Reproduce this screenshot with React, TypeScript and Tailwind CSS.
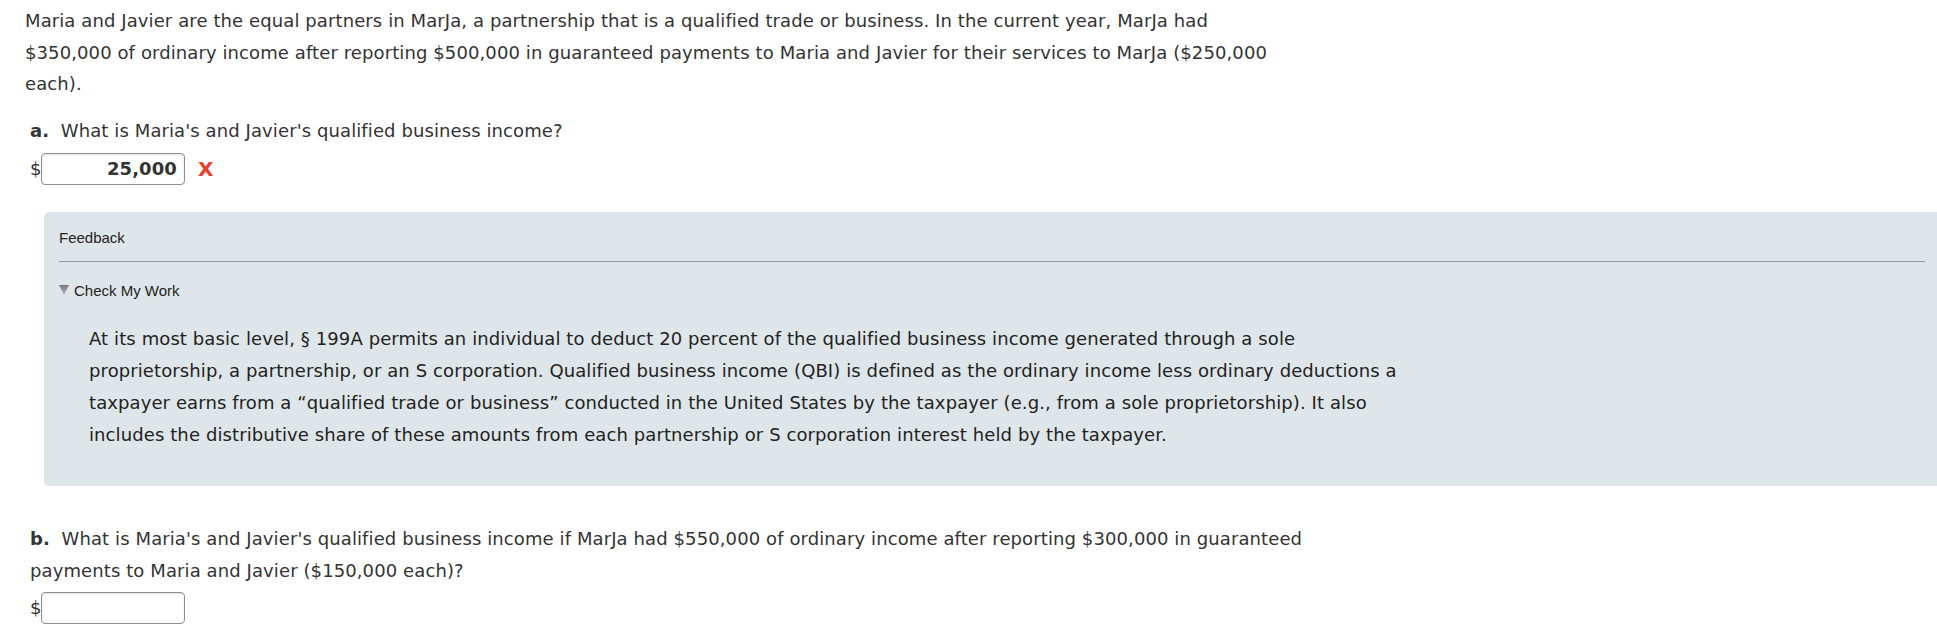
import React from "react";

const verdana = "font-['Verdana','DejaVu_Sans',sans-serif]";

function Triangle() {
  return (
    <svg width="10" height="10" viewBox="0 0 10 10" className="mr-[5px] shrink-0">
      <defs>
        <linearGradient id="tg" x1="0" y1="0" x2="0" y2="1">
          <stop offset="0" stopColor="#7a7a7a" />
          <stop offset="1" stopColor="#bdbdbd" />
        </linearGradient>
      </defs>
      <polygon points="0,0 10,0 5,10" fill="url(#tg)" />
    </svg>
  );
}

function MoneyInput({ value }: { value?: string }) {
  return (
    <div className="flex items-center">
      <span className="text-[18px] text-[#333] leading-none w-[11px]">$</span>
      <div className="w-[144px] h-[32px] rounded-[4px] border border-[#8f8f8f] bg-white shadow-[inset_0_1px_2px_rgba(0,0,0,0.12)] flex items-center justify-end pr-[7px]">
        {value ? (
          <span className="font-bold text-[18px] text-[#333]">{value}</span>
        ) : null}
      </div>
    </div>
  );
}

export default function App() {
  return (
    <div className={`${verdana} bg-white min-h-[640px] text-[#333] text-[18px] tracking-[0.1px]`}>
      <p className="pl-[25px] pt-[5px] leading-[31.5px]">
        Maria and Javier are the equal partners in MarJa, a partnership that is a qualified trade or business. In the current year, MarJa had
        <br />
        $350,000 of ordinary income after reporting $500,000 in guaranteed payments to Maria and Javier for their services to MarJa ($250,000
        <br />
        each).
      </p>

      <div className="pl-[30px] mt-[15px]">
        <p className="leading-[31px]">
          <span className="font-bold">a.</span>&nbsp; What is Maria's and Javier's qualified business income?
        </p>
      </div>
      <div className="pl-[30px] mt-[7px] flex items-center">
        <MoneyInput value="25,000" />
        <span className="ml-[13px] font-bold text-[20px] text-[#e8402f] leading-none">X</span>
      </div>

      <div className="ml-[44px] mt-[27px] bg-[#dfe6e9] rounded-l-[5px] pl-[15px] pr-[12px] pt-[17px] pb-[35px] tracking-normal">
        <div className="font-['Arial','Liberation_Sans',sans-serif] text-[15px] text-[#222] leading-[17px]">Feedback</div>
        <div className="mt-[15px] h-px bg-[#999]" />
        <div className="mt-[20px] flex items-center font-['Arial','Liberation_Sans',sans-serif] text-[15px] text-[#222] leading-[17px]">
          <Triangle />
          <span>Check My Work</span>
        </div>
        <p className="mt-[24px] pl-[30px] leading-[32px] text-[#222] tracking-[0.1px]">
          At its most basic level, § 199A permits an individual to deduct 20 percent of the qualified business income generated through a sole
          <br />
          proprietorship, a partnership, or an S corporation. Qualified business income (QBI) is defined as the ordinary income less ordinary deductions a
          <br />
          taxpayer earns from a “qualified trade or business” conducted in the United States by the taxpayer (e.g., from a sole proprietorship). It also
          <br />
          includes the distributive share of these amounts from each partnership or S corporation interest held by the taxpayer.
        </p>
      </div>

      <div className="pl-[30px] mt-[37px]">
        <p className="leading-[32px]">
          <span className="font-bold">b.</span>&nbsp; What is Maria's and Javier's qualified business income if MarJa had $550,000 of ordinary income after reporting $300,000 in guaranteed
        </p>
      </div>
      <p className="pl-[30px] leading-[32px]">payments to Maria and Javier ($150,000 each)?</p>
      <div className="pl-[30px] mt-[5px]">
        <MoneyInput />
      </div>
    </div>
  );
}
